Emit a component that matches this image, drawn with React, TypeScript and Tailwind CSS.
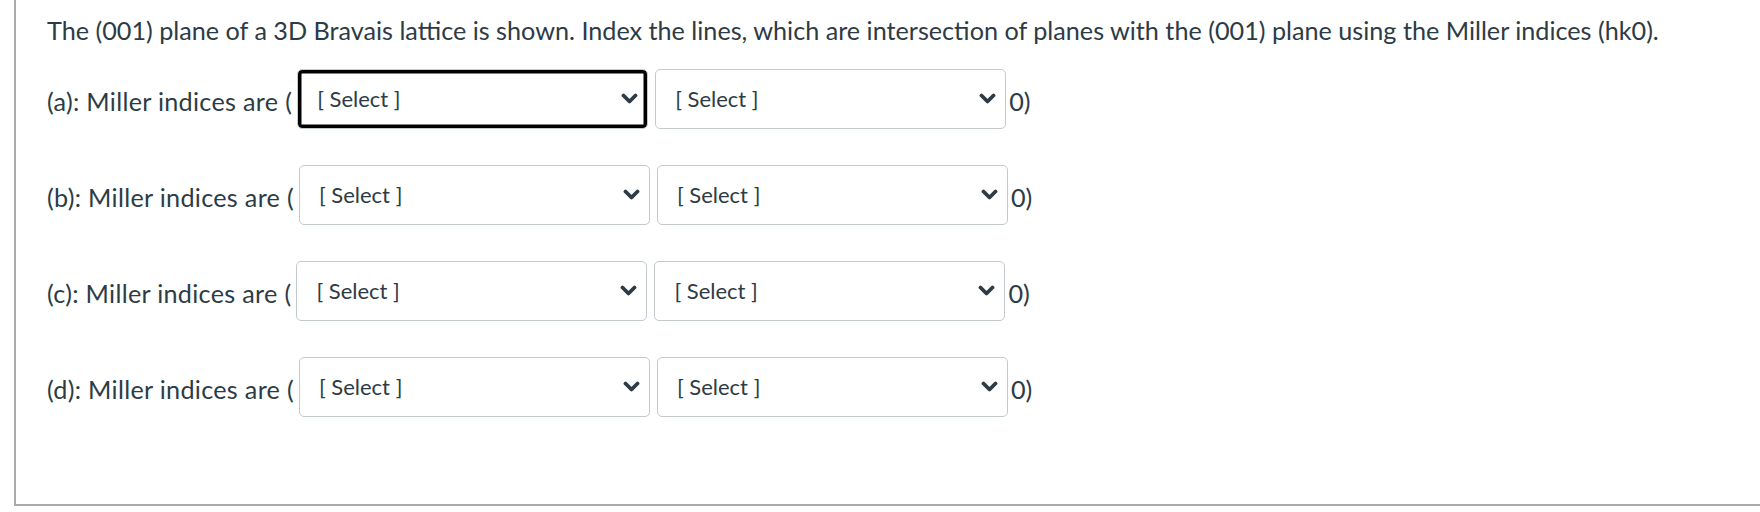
import React from "react";

function Chevron() {
  return (
    <svg width="17" height="12" viewBox="0 0 17 12" className="shrink-0">
      <path d="M2.5 2.5 L8.5 8.5 L14.5 2.5" fill="none" stroke="#2d3b45" strokeWidth="3.8" strokeLinecap="round" strokeLinejoin="round" />
    </svg>
  );
}

function FakeSelect({ focused = false }: { focused?: boolean }) {
  return (
    <div
      className={
        "flex h-[60px] w-[351px] shrink-0 items-center justify-between rounded-[5px] border-[1.5px] border-[#c4c9cc] bg-white pl-[19px] pr-[9px] " +
        (focused ? "ring-[3.5px] ring-inset ring-black" : "")
      }
    >
      <span className="text-[22px] leading-none text-[#2d3b45]">[ Select ]</span>
      <Chevron />
    </div>
  );
}

function Row({ letter, focused = false }: { letter: string; focused?: boolean }) {
  return (
    <div className="mt-[36px] flex h-[60px] items-center">
      <span className="pr-[5px] pt-[7px] text-[25.2px] leading-[37.8px] tracking-[0.3px]">({letter}): Miller indices are (</span>
      <FakeSelect focused={focused} />
      <div className="w-[7px]" />
      <FakeSelect />
      <span className="pl-[3px] pt-[7px] text-[25.2px] leading-[37.8px]">0)</span>
    </div>
  );
}

export default function App() {
  return (
    <div className="h-[512px] overflow-hidden bg-white font-['Lato',sans-serif] text-[#2d3b45]">
      <div className="ml-[14px] h-[506px] border-b-2 border-l-2 border-[#aaa] pl-[31px] pt-[12px]">
        <p className="text-[25.2px] leading-[37.8px] whitespace-nowrap">
          The (001) plane of a 3D Bravais lattice is shown. Index the lines, which are intersection of planes with the (001) plane using the Miller indices (hk0).
        </p>
        <div className="-mt-[17px]">
          <Row letter="a" focused />
          <Row letter="b" />
          <Row letter="c" />
          <Row letter="d" />
        </div>
      </div>
    </div>
  );
}
